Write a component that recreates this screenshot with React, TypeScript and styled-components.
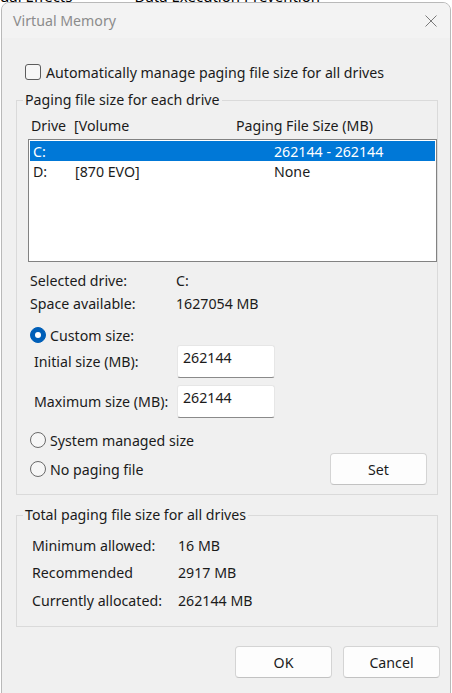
import styled, { createGlobalStyle } from 'styled-components';

const GlobalStyle = createGlobalStyle`
    html, body {
        margin: 0;
        padding: 0;
        background: #ffffff;
    }
    body {
        font-family: "Noto Sans", "Liberation Sans", sans-serif;
        font-size: 14.2px;
        color: #1b1b1b;
    }
`

type Drive = {
    letter: string,
    volume: string,
    size: string,
    selected?: boolean
}

const drives: Drive[] = [
    { letter: "C:", volume: "", size: "262144 - 262144", selected: true },
    { letter: "D:", volume: "[870 EVO]", size: "None" }
]

const totals = [
    { label: "Minimum allowed:", value: "16 MB" },
    { label: "Recommended", value: "2917 MB" },
    { label: "Currently allocated:", value: "262144 MB" }
]

const CloseIcon = () => (
    <svg width="12" height="12" viewBox="0 0 12 12">
        <path d="M0.5 0.5 L11.5 11.5 M11.5 0.5 L0.5 11.5" stroke="#7a7a7a" strokeWidth="1" fill="none" />
    </svg>
)

const App = () => {
    return (
        <Page>
            <GlobalStyle />
            <Backdrop>
                <BackText $left={-20}>Visual Effects</BackText>
                <BackText $left={62}>Data Execution Prevention</BackText>
            </Backdrop>
            <Window>
                <TitleBar>
                    <span>Virtual Memory</span>
                    <CloseButton><CloseIcon /></CloseButton>
                </TitleBar>
                <Body>
                    <CheckRow>
                        <CheckBox />
                        <span>Automatically manage paging file size for all drives</span>
                    </CheckRow>

                    <Group $padLeft={13} $padBottom={9}>
                        <Legend $padLeft={13}>Paging file size for each drive</Legend>
                        <ListHeader>
                            <span>Drive</span>
                            <span>[Volume</span>
                            <span>Paging File Size (MB)</span>
                        </ListHeader>
                        <ListBox>
                            {drives.map((d, i) => (
                                <ListRow key={i} $selected={!!d.selected}>
                                    <span>{d.letter}</span>
                                    <span>{d.volume}</span>
                                    <span>{d.size}</span>
                                </ListRow>
                            ))}
                        </ListBox>

                        <InfoRow $top={8}>
                            <span>Selected drive:</span>
                            <span>C:</span>
                        </InfoRow>
                        <InfoRow $top={3}>
                            <span>Space available:</span>
                            <span>1627054 MB</span>
                        </InfoRow>

                        <RadioRow $top={12}>
                            <Radio $checked />
                            <span>Custom size:</span>
                        </RadioRow>
                        <FieldRow $top={0}>
                            <span>Initial size (MB):</span>
                            <TextBox>262144</TextBox>
                        </FieldRow>
                        <FieldRow $top={7}>
                            <span>Maximum size (MB):</span>
                            <TextBox>262144</TextBox>
                        </FieldRow>
                        <RadioRow $top={12}>
                            <Radio />
                            <span>System managed size</span>
                        </RadioRow>
                        <LastRow>
                            <RadioRow $top={0}>
                                <Radio />
                                <span>No paging file</span>
                            </RadioRow>
                            <Button>Set</Button>
                        </LastRow>
                    </Group>

                    <Group $padLeft={15} $padBottom={16} $top={10}>
                        <Legend $padLeft={15}>Total paging file size for all drives</Legend>
                        <Totals>
                            {totals.map((t, i) => (
                                <TotalRow key={i}>
                                    <span>{t.label}</span>
                                    <span>{t.value}</span>
                                </TotalRow>
                            ))}
                        </Totals>
                    </Group>

                    <Footer>
                        <Button>OK</Button>
                        <Button>Cancel</Button>
                    </Footer>
                </Body>
            </Window>
        </Page>
    );
}

export default App;

const Page = styled.div`
    width: 452px;
    height: 693px;
    overflow: hidden;
`

const Backdrop = styled.div`
    height: 2px;
    overflow: hidden;
    display: flex;
    color: #000;
    font-size: 15px;
`

const BackText = styled.span<{ $left: number }>`
    flex: none;
    margin-left: ${p => p.$left}px;
    margin-top: -11px;
    line-height: 15px;
`

const Window = styled.div`
    margin-left: 1px;
    width: 450px;
    height: 700px;
    box-sizing: border-box;
    border: 1px solid #b9b9b9;
    border-radius: 8px;
    background: #f0f0f0;
    overflow: hidden;
`

const TitleBar = styled.div`
    height: 35px;
    background: #f3f3f3;
    display: flex;
    align-items: center;
    justify-content: space-between;
    padding: 0 12px 0 11px;
    color: #8c8c8c;
`

const CloseButton = styled.div`
    display: flex;
    align-items: center;
    padding-right: 1px;
    padding-top: 1px;
`

const Body = styled.div`
    padding: 24px 12px 0 14px;
    display: flex;
    flex-direction: column;
`

const CheckRow = styled.label`
    height: 20px;
    display: flex;
    align-items: center;
    gap: 5px;
    padding-left: 9px;
`

const CheckBox = styled.span`
    width: 16px;
    height: 16px;
    box-sizing: border-box;
    border: 1px solid #5c5c5c;
    border-radius: 3px;
    background: #f6f6f6;
`

const Group = styled.fieldset<{ $padLeft: number, $padBottom: number, $top?: number }>`
    margin: ${p => p.$top || 8}px 0 0 0;
    padding: 0 0 ${p => p.$padBottom}px ${p => p.$padLeft}px;
    border: 1px solid #dadada;
    min-width: 0;
`

const Legend = styled.legend<{ $padLeft: number }>`
    margin-left: ${p => 6 - p.$padLeft}px;
    padding: 0 2px;
    line-height: 20px;
    height: 20px;
`

const ListHeader = styled.div`
    margin-top: 5px;
    height: 20px;
    display: grid;
    grid-template-columns: 43px 162px 1fr;
    align-items: center;
    padding-left: 1px;
`

const ListBox = styled.div`
    margin: 4px 0 0 -2px;
    height: 123px;
    box-sizing: border-box;
    border: 1px solid #828282;
    background: #ffffff;
    padding: 1px;
`

const ListRow = styled.div<{ $selected: boolean }>`
    height: 20px;
    display: grid;
    grid-template-columns: 42px 199px 1fr;
    align-items: center;
    padding-left: 3px;
    background: ${p => p.$selected ? "#0078d7" : "transparent"};
    color: ${p => p.$selected ? "#ffffff" : "#1b1b1b"};
`

const InfoRow = styled.div<{ $top: number }>`
    margin-top: ${p => p.$top}px;
    height: 20px;
    display: grid;
    grid-template-columns: 146px 1fr;
    align-items: center;
`

const RadioRow = styled.div<{ $top: number }>`
    margin-top: ${p => p.$top}px;
    height: 20px;
    display: flex;
    align-items: center;
    gap: 4px;
`

const Radio = styled.span<{ $checked?: boolean }>`
    width: 16px;
    height: 16px;
    box-sizing: border-box;
    border-radius: 50%;
    display: flex;
    align-items: center;
    justify-content: center;
    border: 1px solid ${p => p.$checked ? "#005fb8" : "#6a6a6a"};
    background: ${p => p.$checked ? "#005fb8" : "#f6f6f6"};
    &::after {
        content: "";
        width: 6px;
        height: 6px;
        border-radius: 50%;
        background: #ffffff;
        display: ${p => p.$checked ? "block" : "none"};
    }
`

const FieldRow = styled.div<{ $top: number }>`
    margin-top: ${p => p.$top}px;
    height: 33px;
    display: grid;
    grid-template-columns: 143px 98px;
    align-items: center;
    padding-left: 4px;
`

const TextBox = styled.div`
    height: 33px;
    box-sizing: border-box;
    background: #ffffff;
    border: 1px solid #e6e6e6;
    border-bottom: 1px solid #8a8a8a;
    border-radius: 3px;
    padding: 2px 0 0 5px;
    line-height: 20px;
`

const LastRow = styled.div`
    margin-top: 3px;
    height: 32px;
    display: flex;
    align-items: center;
    justify-content: space-between;
    padding-right: 10px;
`

const Button = styled.div`
    width: 97px;
    height: 32px;
    box-sizing: border-box;
    display: flex;
    align-items: center;
    justify-content: center;
    background: #fdfdfd;
    border: 1px solid #d4d4d4;
    border-bottom-color: #c2c2c2;
    border-radius: 4px;
    color: #1b1b1b;
`

const Totals = styled.div`
    padding-top: 10px;
    display: flex;
    flex-direction: column;
    gap: 7.5px;
`

const TotalRow = styled.div`
    height: 20px;
    display: grid;
    grid-template-columns: 146px 1fr;
    align-items: center;
`

const Footer = styled.div`
    margin: 19px -2px 0 0;
    display: flex;
    justify-content: flex-end;
    gap: 11px;
`
